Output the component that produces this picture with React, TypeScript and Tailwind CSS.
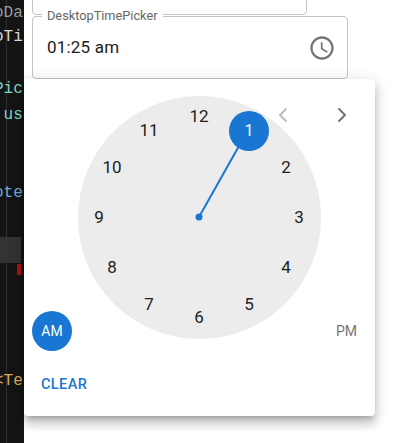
import { ChevronLeft, ChevronRight } from "lucide-react";

const NUMBERS = [
  { label: "12", x: 199, y: 116 },
  { label: "11", x: 149, y: 130 },
  { label: "10", x: 112, y: 167 },
  { label: "9", x: 99, y: 217 },
  { label: "8", x: 112, y: 267 },
  { label: "7", x: 149, y: 304 },
  { label: "6", x: 199, y: 317 },
  { label: "5", x: 249, y: 304 },
  { label: "4", x: 286, y: 267 },
  { label: "3", x: 299, y: 217 },
  { label: "2", x: 286, y: 167 },
];

const CODE = [
  { text: "oDa", top: 4, color: "text-[#9a9a9a]" },
  { text: "oTi", top: 28, color: "text-[#d8d8d8]" },
  { text: "Pic", top: 80, color: "text-[#7fd4c4]" },
  { text: ".us", top: 106, color: "text-[#7fd4c4]" },
  { text: "ote", top: 184, color: "text-[#6fa8d0]" },
  { text: "<Te", top: 372, color: "text-[#d8a860]" },
];

export default function App() {
  return (
    <div className="relative h-[443px] w-[415px] overflow-hidden bg-white font-['Roboto',sans-serif]">
      {/* editor behind the page */}
      <div className="absolute left-0 top-0 h-full w-[24px] overflow-hidden bg-[#141414] font-['Liberation_Mono',monospace] text-[16px]">
        <div className="absolute left-[6px] top-0 h-full w-px bg-[#2e2e2e]" />
        <div className="absolute left-0 top-[237px] h-[26px] w-[21px] bg-[#333333]" />
        <div className="absolute left-[17px] top-[264px] h-[11px] w-[4px] bg-[#b01212]" />
        {CODE.map((line) => (
          <div key={line.top} className={`absolute left-[-6px] whitespace-nowrap leading-[18px] ${line.color}`} style={{ top: line.top }}>
            {line.text}
          </div>
        ))}
      </div>

      {/* fields */}
      <div className="absolute left-[32px] top-[-40px] h-[55px] w-[275px] rounded border border-[#c4c4c4] bg-white" />
      <div className="absolute left-[32px] top-[16px] flex h-[63px] w-[316px] items-center justify-between rounded border border-[#c4c4c4] bg-white pl-[14px] pr-[11px]">
        <span className="absolute left-[9px] top-[-9px] bg-white px-[5px] text-[12.75px] leading-[16px] text-[#666666]">DesktopTimePicker</span>
        <span className="text-[17px] tracking-[0.2px] text-[#212121]">01:25 am</span>
        <svg viewBox="0 0 24 24" className="h-[28px] w-[28px] fill-[#757575]">
          <path d="M11.99 2C6.47 2 2 6.48 2 12s4.47 10 9.99 10C17.52 22 22 17.52 22 12S17.52 2 11.99 2zM12 20c-4.42 0-8-3.58-8-8s3.58-8 8-8 8 3.58 8 8-3.58 8-8 8z" />
          <path d="M12.5 7H11v6l5.25 3.15.75-1.23-4.5-2.67z" />
        </svg>
      </div>

      {/* popup */}
      <div className="absolute left-[24px] top-[79px] h-[337px] w-[351px] rounded bg-white shadow-[0_5px_5px_-3px_rgba(0,0,0,0.2),0_8px_10px_1px_rgba(0,0,0,0.14),0_3px_14px_2px_rgba(0,0,0,0.12)]" />

      {/* clock face, positions relative to page */}
      <div className="absolute left-[78px] top-[96px] h-[243px] w-[243px] rounded-full bg-[#ececec]" />
      <svg className="absolute left-0 top-0" width="415" height="443">
        <line x1="199" y1="217" x2="248" y2="130" stroke="#1976d2" strokeWidth="2" />
        <circle cx="199" cy="217" r="3.5" fill="#1976d2" />
      </svg>
      <div className="absolute left-[229px] top-[111px] flex h-[40px] w-[40px] items-center justify-center rounded-full bg-[#1976d2] text-[16px] text-white">1</div>
      {NUMBERS.map((n) => (
        <span
          key={n.label}
          className="absolute -translate-x-1/2 -translate-y-1/2 text-[17px] leading-none text-[#212121]"
          style={{ left: n.x, top: n.y }}
        >
          {n.label}
        </span>
      ))}

      <ChevronLeft className="absolute left-[271px] top-[103px] h-[24px] w-[24px] text-[#bdbdbd]" strokeWidth={2} />
      <ChevronRight className="absolute left-[330px] top-[103px] h-[24px] w-[24px] text-[#757575]" strokeWidth={2} />

      <div className="absolute left-[32px] top-[311px] flex h-[40px] w-[40px] items-center justify-center rounded-full bg-[#1976d2] text-[14px] text-white">AM</div>
      <span className="absolute left-[336px] top-[323px] text-[14px] leading-[16px] text-[#757575]">PM</span>
      <span className="absolute left-[41px] top-[377px] text-[14.5px] font-medium leading-[16px] tracking-[0.4px] text-[#1976d2]">CLEAR</span>
    </div>
  );
}
